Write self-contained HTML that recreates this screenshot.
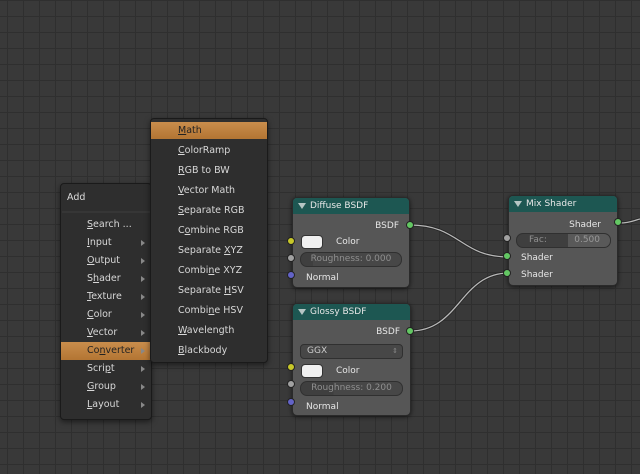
<!DOCTYPE html>
<html><head><meta charset="utf-8"><style>
*{margin:0;padding:0;box-sizing:border-box}
body{width:640px;height:474px;overflow:hidden;position:relative;font-family:"DejaVu Sans","Liberation Sans",sans-serif;font-size:9px;color:#e6e6e6;white-space:nowrap;
background-color:#393939;
background-image:linear-gradient(to right,#2f2f2f 1px,transparent 1px),linear-gradient(to bottom,#2f2f2f 1px,transparent 1px);
background-size:16px 16px;background-position:7px 0px}
.a{position:absolute}
.menu{background:#2e2e2e;border:1px solid #1a1a1a;border-radius:4px;box-shadow:0 2px 6px rgba(0,0,0,.5)}
.it{position:absolute;left:0;right:0;height:18px;line-height:18px;color:#d8d8d8;font-size:9.5px}
.hl{background:linear-gradient(#c98d4c,#b37533);color:#222}
.arr{position:absolute;right:6px;top:6px;width:0;height:0;border-left:4px solid #888;border-top:3px solid transparent;border-bottom:3px solid transparent}
.node{background:#565656;border-radius:5px;box-shadow:0 1px 4px rgba(0,0,0,.6);border:1px solid #2a2a2a}
.hd{position:absolute;left:0;right:0;top:0;height:16px;background:#1d5752;border-radius:4px 4px 0 0;line-height:16px;padding-left:17px;color:#e8e8e8}
.hd:before{content:"";position:absolute;left:5px;top:5px;border-top:6px solid #b5c6c4;border-left:4px solid transparent;border-right:4px solid transparent}
.s{position:absolute;width:8px;height:8px;border-radius:50%;border:1px solid #222}
.g{background:#63c763}.y{background:#c7c729}.gr{background:#a1a1a1}.b{background:#6363c7}
.fld{position:absolute;height:15px;border-radius:7px;background:#474747;border:1px solid #303030;color:#8f8f8f;line-height:13px;text-align:center}
.sw{position:absolute;width:22px;height:14px;border-radius:4px;background:#f0f0f0;border:1px solid #333}
</style></head><body>
<svg class="a" style="left:0;top:0" width="640" height="474">
<g fill="none" stroke="#262626" stroke-width="3">
<path d="M410 225 C460 225,460 257,509 257"/><path d="M410 331 C460 331,460 273,509 273"/><path d="M620 223 C630 223,635 220,640 219"/></g>
<g fill="none" stroke="#b8b8b8" stroke-width="1.3">
<path d="M410 225 C460 225,460 257,509 257"/><path d="M410 331 C460 331,460 273,509 273"/><path d="M620 223 C630 223,635 220,640 219"/></g>
</svg>

<div class="a menu" style="left:60px;top:183px;width:92px;height:237px">
<div class="it" style="top:5px;left:6px;color:#ddd">Add</div>
<div class="a" style="left:1px;right:1px;top:27px;height:2px;background:#363636"></div>
<div class="it" style="top:32px;padding-left:26px"><u>S</u>earch ...</div>
<div class="it" style="top:50px;padding-left:26px"><u>I</u>nput<span class="arr"></span></div>
<div class="it" style="top:68px;padding-left:26px"><u>O</u>utput<span class="arr"></span></div>
<div class="it" style="top:86px;padding-left:26px">S<u>h</u>ader<span class="arr"></span></div>
<div class="it" style="top:104px;padding-left:26px"><u>T</u>exture<span class="arr"></span></div>
<div class="it" style="top:122px;padding-left:26px"><u>C</u>olor<span class="arr"></span></div>
<div class="it" style="top:140px;padding-left:26px"><u>V</u>ector<span class="arr"></span></div>
<div class="it hl" style="top:158px;padding-left:26px">Co<u>n</u>verter<span class="arr"></span></div>
<div class="it" style="top:176px;padding-left:26px">Scri<u>p</u>t<span class="arr"></span></div>
<div class="it" style="top:194px;padding-left:26px"><u>G</u>roup<span class="arr"></span></div>
<div class="it" style="top:212px;padding-left:26px"><u>L</u>ayout<span class="arr"></span></div>
</div>

<div class="a menu" style="left:150px;top:118px;width:118px;height:245px">
<div class="it hl" style="top:3px;height:17px;line-height:17px;padding-left:27px"><u>M</u>ath</div>
<div class="it" style="top:23px;padding-left:27px"><u>C</u>olorRamp</div>
<div class="it" style="top:43px;padding-left:27px"><u>R</u>GB to BW</div>
<div class="it" style="top:63px;padding-left:27px"><u>V</u>ector Math</div>
<div class="it" style="top:83px;padding-left:27px"><u>S</u>eparate RGB</div>
<div class="it" style="top:103px;padding-left:27px">C<u>o</u>mbine RGB</div>
<div class="it" style="top:123px;padding-left:27px">Separate <u>X</u>YZ</div>
<div class="it" style="top:143px;padding-left:27px">Combi<u>n</u>e XYZ</div>
<div class="it" style="top:163px;padding-left:27px">Separate <u>H</u>SV</div>
<div class="it" style="top:183px;padding-left:27px">Combi<u>n</u>e HSV</div>
<div class="it" style="top:203px;padding-left:27px"><u>W</u>avelength</div>
<div class="it" style="top:223px;padding-left:27px"><u>B</u>lackbody</div>
</div>

<div class="a node" style="left:292px;top:197px;width:118px;height:91px">
<div class="hd">Diffuse BSDF</div>
<div class="a" style="right:10px;top:23px">BSDF</div>
<div class="sw" style="left:8px;top:37px"></div><div class="a" style="left:43px;top:39px">Color</div>
<div class="fld" style="left:7px;top:54px;right:7px;background:linear-gradient(to right,#3f3f3f 12%,#474747 12%)">Roughness: 0.000</div>
<div class="a" style="left:13px;top:75px">Normal</div>
</div>
<div class="s g a" style="left:406px;top:221px"></div>
<div class="s y a" style="left:287px;top:237px"></div>
<div class="s gr a" style="left:287px;top:254px"></div>
<div class="s b a" style="left:287px;top:271px"></div>

<div class="a node" style="left:292px;top:303px;width:119px;height:113px">
<div class="hd">Glossy BSDF</div>
<div class="a" style="right:10px;top:23px">BSDF</div>
<div class="fld" style="left:7px;top:40px;right:7px;border-radius:4px;text-align:left;padding-left:6px;color:#ccc">GGX<span style="position:absolute;right:4px;top:0;font-size:7px;color:#888">⇕</span></div>
<div class="sw" style="left:8px;top:60px"></div><div class="a" style="left:43px;top:62px">Color</div>
<div class="fld" style="left:7px;top:77px;right:7px;background:linear-gradient(to right,#3f3f3f 32%,#474747 32%)">Roughness: 0.200</div>
<div class="a" style="left:13px;top:98px">Normal</div>
</div>
<div class="s g a" style="left:406px;top:327px"></div>
<div class="s y a" style="left:287px;top:363px"></div>
<div class="s gr a" style="left:287px;top:380px"></div>
<div class="s b a" style="left:287px;top:398px"></div>

<div class="a node" style="left:508px;top:195px;width:110px;height:91px">
<div class="hd">Mix Shader</div>
<div class="a" style="right:16px;top:24px">Shader</div>
<div class="fld" style="left:7px;top:37px;width:95px;text-align:left;background:linear-gradient(to right,#3f3f3f 55%,#595959 55%)"><span style="margin-left:12px">Fac:</span><span style="position:absolute;right:10px;color:#999">0.500</span></div>
<div class="a" style="left:12px;top:57px">Shader</div>
<div class="a" style="left:12px;top:74px">Shader</div>
</div>
<div class="s g a" style="left:614px;top:218px"></div>
<div class="s gr a" style="left:503px;top:234px"></div>
<div class="s g a" style="left:503px;top:252px"></div>
<div class="s g a" style="left:503px;top:269px"></div>
</body></html>
